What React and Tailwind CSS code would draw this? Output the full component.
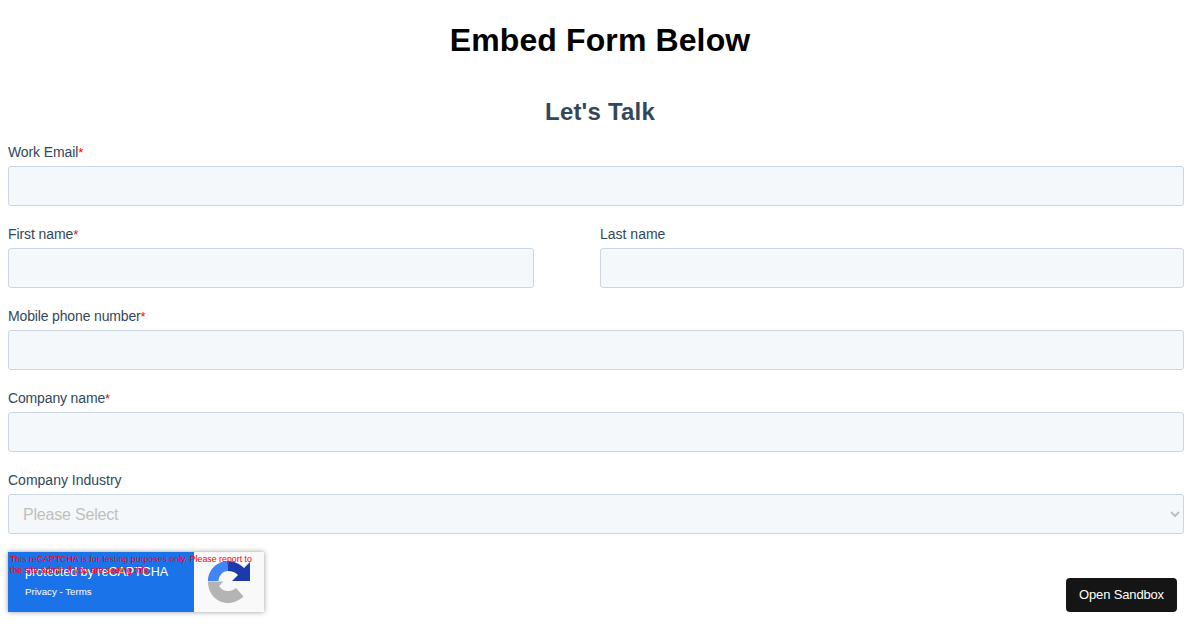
const inputCls = "block w-full h-[40px] bg-[#f5f8fa] border border-[#cbd6e2] rounded-[3px] text-[16px]";

function Label({ text, required, tracking = "" }) {
  return (
    <label className="block text-[14px] leading-[20px] text-[#33475b] mb-[4px]">
      <span className={tracking}>{text}</span>
      {required && <span className="text-[#ff0000] text-[13px] leading-[1]">*</span>}
    </label>
  );
}

function Field({ text, required, tracking, className = "" }) {
  return (
    <div className={className}>
      <Label text={text} required={required} tracking={tracking} />
      <input className={inputCls + " px-[15px]"} />
    </div>
  );
}

function RecaptchaLogo() {
  return (
    <svg width="42" height="42" viewBox="0 0 42 42" fill="none">
      <path d="M20 0 C26 0 32 3 36 7 L42 1 V20 H24 L30 14 C27 11 24 10 20 10 Z" fill="#1c3aa9" />
      <path d="M20 0 C9 0 0 9 0 20 H10.5 C10.5 15 14.5 10 20 10 Z" fill="#4285f4" />
      <path d="M0 20.5 H15.5 L11 25 C13 28 16 30 20 30 C23 30 26 29 28 27 L35.5 35.5 C31 39.5 26 42 20 42 C9 42 0 33 0 20.5 Z" fill="#b4b4b4" />
    </svg>
  );
}

export default function App() {
  return (
    <div className="relative h-[630px] overflow-hidden bg-white pl-[8px] pr-[16px] [font-family:'Liberation_Sans',Arial,sans-serif]">
      <h1 className="pt-[22px] pl-[8px] text-center text-[32px] leading-[37px] font-bold text-black tracking-[0.12px]">Embed Form Below</h1>
      <form className="pt-[39px]">
        <h2 className="pl-[8px] text-center text-[24px] leading-[28px] font-bold text-[#33475b] mb-[16px] tracking-[0.2px]">Let's Talk</h2>
        <div className="flex flex-col gap-[18px]">
          <Field text="Work Email" required tracking="tracking-[-0.1px]" />
          <div className="flex gap-[66px]">
            <Field text="First name" required tracking="tracking-[-0.1px]" className="w-[526px]" />
            <Field text="Last name" className="flex-1" />
          </div>
          <Field text="Mobile phone number" required tracking="tracking-[-0.15px]" />
          <Field text="Company name" required tracking="tracking-[-0.15px]" />
          <div>
            <Label text="Company Industry" />
            <select className={inputCls + " px-[10px] text-[#bfbfbf] tracking-[-0.2px]"} defaultValue="">
              <option value="">Please Select</option>
            </select>
          </div>
        </div>
        <div className="relative mt-[18px] h-[60px] w-[256px] flex bg-[#f9f9f9] shadow-[0_0_5px_rgba(128,128,128,0.8)]">
          <div className="w-[186px] bg-[#1a73e8] text-white pl-[17px]">
            <div className="pt-[12px] text-[12.5px] leading-[17px]">protected by reCAPTCHA</div>
            <div className="pt-[4px] text-[9.7px] leading-[14px]">Privacy - Terms</div>
          </div>
          <div className="flex-1 flex items-center justify-center">
            <RecaptchaLogo />
          </div>
          <div className="absolute left-[2px] top-[2px] w-[250px] text-[8.8px] leading-[11px] text-[#ff0000]">
            This reCAPTCHA is for testing purposes only. Please report to the site admin if you are seeing this.
          </div>
        </div>
      </form>
      <button className="absolute left-[1066px] top-[578px] h-[34px] w-[111px] rounded-[4px] bg-[#151515] text-[13px] tracking-[-0.15px] text-white">Open Sandbox</button>
    </div>
  );
}
